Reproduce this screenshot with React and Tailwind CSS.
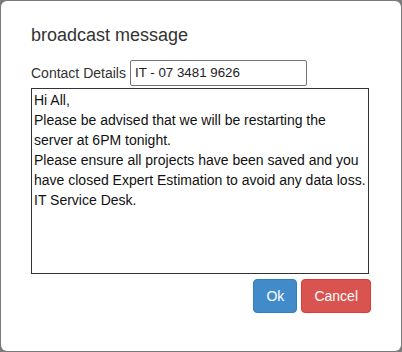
export default function App() {
  const font = { fontFamily: '"Liberation Sans", Arial, sans-serif' };
  return (
    <div className="w-[402px] h-[352px] bg-[#7b7b7b] p-px" style={font}>
      <div className="h-full w-full bg-white rounded-[6px] flex flex-col text-[#333]">
        <div className="pl-[30px] pt-[24px] h-[58px]">
          <h4 className="text-[18px] leading-[20px] font-normal m-0">broadcast message</h4>
        </div>
        <div className="pl-[30px] flex items-center h-[26px] mt-[1px]">
          <span className="text-[14px] leading-[20px] mr-[4px]">Contact Details</span>
          <div className="w-[177px] h-[26px] border border-[#767676] rounded-[2px] flex items-center pl-[4px] text-[13.33px] text-[#222]">
            IT - 07 3481 9626
          </div>
        </div>
        <div className="ml-[30px] mt-[2px] w-[338px] h-[186px] border border-[#333] pl-[2px] pt-[1px] text-[14px] leading-[20px] text-[#111]">
          <div>Hi All,</div>
          <div>Please be advised that we will be restarting the</div>
          <div>server at 6PM tonight.</div>
          <div>Please ensure all projects have been saved and you</div>
          <div>have closed Expert Estimation to avoid any data loss.</div>
          <div>IT Service Desk.</div>
        </div>
        <div className="flex justify-end gap-[4px] pr-[30px] mt-[5px]">
          <button className="w-[44px] h-[34px] text-[14px] leading-[20px] text-white bg-[#428bca] border border-[#357ebd] rounded-[4px]" style={font}>Ok</button>
          <button className="h-[34px] px-[12px] text-[14px] leading-[20px] text-white bg-[#d9534f] border border-[#d43f3a] rounded-[4px]" style={font}>Cancel</button>
        </div>
      </div>
    </div>
  );
}
